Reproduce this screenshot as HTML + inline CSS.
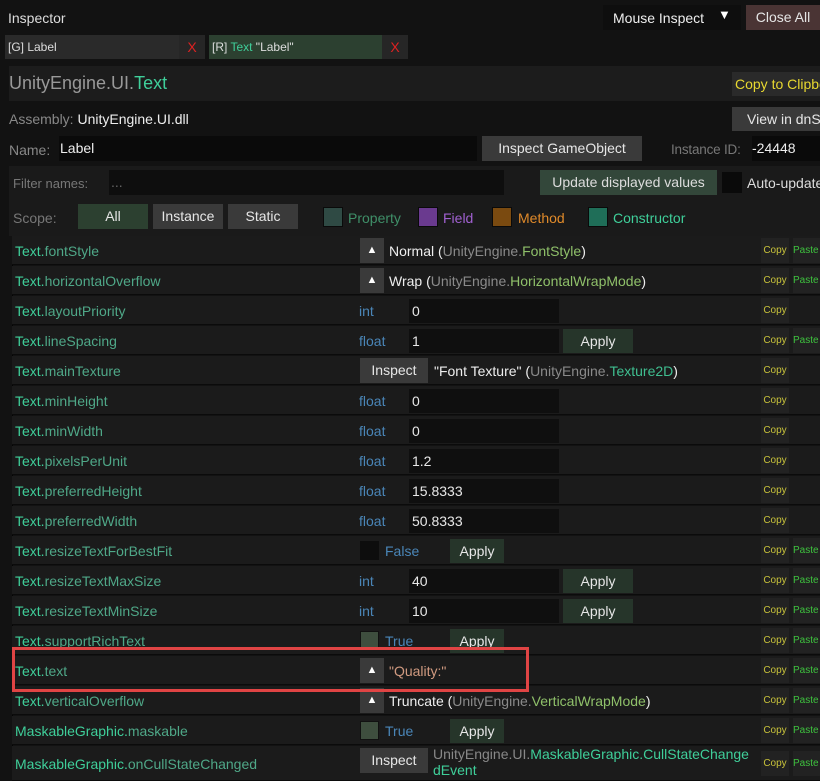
<!DOCTYPE html>
<html><head><meta charset="utf-8"><style>
*{margin:0;padding:0;box-sizing:border-box}
body{width:820px;height:781px;overflow:hidden;background:#121212;font-family:"Liberation Sans",sans-serif;font-size:14px;color:#ddd;position:relative}
.a{position:absolute;white-space:nowrap}
.btn{position:absolute;background:#3a3a3a;color:#e6e6e6;text-align:center;white-space:nowrap;overflow:hidden}
.g{color:#3fcf9a}.dg{color:#4fa888}.gr{color:#8a8a8a}.lg{color:#8fc06a}.bl{color:#4a86b8}
.row{position:absolute;left:12px;width:808px;height:29px;background:#1b1b1b;border-bottom:1px solid #0b0b0b}
.row .lb{position:absolute;left:3px;top:7px;white-space:nowrap}
.inp{position:absolute;background:#0f0f0f;height:24px;top:3px;color:#e8e8e8;padding-left:3px;line-height:24px}
.ap{position:absolute;background:#26352a;color:#e6e6e6;height:24px;top:3px;text-align:center;line-height:24px;font-size:14px}
.arr{position:absolute;left:348px;top:2px;width:24px;height:25px;background:#3a3a3a;color:#fff;text-align:center;line-height:25px;font-size:11px}
.cp{position:absolute;left:749px;top:2px;width:28px;height:25px;background:#222;color:#c8c23a;font-size:10px;line-height:25px;text-align:center}
.ps{position:absolute;left:781px;top:2px;width:30px;height:25px;background:#222;color:#3ec23e;font-size:10px;line-height:25px;overflow:hidden}
.cb{position:absolute;left:348px;top:5px;width:19px;height:19px;background:#0d0d0d}
.cb.on{background:#3e4e3e;border:1px solid #111}
.ty{position:absolute;left:347px;top:7px}
</style></head><body>
<div class="a" style="left:8px;top:10px;color:#ddd">Inspector</div>
<div class="a" style="left:603px;top:5px;width:138px;height:25px;background:#0e0e0e;"></div>
<div class="a" style="left:613px;top:10px;color:#eee">Mouse Inspect</div>
<div class="a" style="left:718px;top:7px;color:#fff;font-size:13px">▼</div>
<div class="btn" style="left:746px;top:5px;width:74px;height:25px;background:#4a3434;line-height:25px">Close All</div>

<div class="a" style="left:5px;top:35px;width:174px;height:24px;background:#2a2a2a"></div>
<div class="a" style="left:8px;top:40px;font-size:12px;color:#ddd">[G] Label</div>
<div class="a" style="left:179px;top:35px;width:26px;height:24px;background:#262626;color:#d22;text-align:center;line-height:24px">X</div>
<div class="a" style="left:209px;top:35px;width:173px;height:24px;background:#2c4030"></div>
<div class="a" style="left:212px;top:40px;font-size:12px;color:#ddd">[R] <span class="g">Text</span> "Label"</div>
<div class="a" style="left:382px;top:35px;width:26px;height:24px;background:#262626;color:#d22;text-align:center;line-height:24px">X</div>

<div class="a" style="left:9px;top:66px;width:811px;height:35px;background:#1c1c1c"></div>
<div class="a" style="left:9px;top:73px;font-size:18px;color:#999">UnityEngine.UI.<span class="g">Text</span></div>
<div class="btn" style="left:732px;top:72px;width:88px;height:24px;line-height:24px;color:#e8d830;text-align:left;padding-left:3px;background:#2a2a2a">Copy to Clipboard</div>
<div class="a" style="left:9px;top:111px;color:#888">Assembly: <span style="color:#eee">UnityEngine.UI.dll</span></div>
<div class="btn" style="left:732px;top:107px;width:88px;height:24px;line-height:24px;text-align:left;padding-left:15px">View in dnSpy</div>
<div class="a" style="left:9px;top:142px;color:#888">Name:</div>
<div class="a" style="left:59px;top:136px;width:418px;height:25px;background:#0a0a0a;color:#eee;line-height:25px;padding-left:1px">Label</div>
<div class="btn" style="left:482px;top:136px;width:160px;height:25px;line-height:25px">Inspect GameObject</div>
<div class="a" style="left:671px;top:142px;color:#777;font-size:13.5px;letter-spacing:-0.2px">Instance ID:</div>
<div class="a" style="left:752px;top:136px;width:68px;height:25px;background:#0a0a0a;color:#eee;line-height:25px;padding-left:0px">-24448</div>

<div class="a" style="left:9px;top:166px;width:811px;height:70px;background:#1a1a1a"></div>
<div class="a" style="left:13px;top:176px;color:#777;font-size:13px">Filter names:</div>
<div class="a" style="left:109px;top:170px;width:395px;height:25px;background:#0e0e0e;color:#666;padding-left:2px;line-height:25px">...</div>
<div class="btn" style="left:540px;top:170px;width:177px;height:25px;line-height:25px;background:#33473a;color:#ddd">Update displayed values</div>
<div class="a" style="left:722px;top:172px;width:20px;height:21px;background:#0a0a0a"></div>
<div class="a" style="left:747px;top:175px;color:#ddd">Auto-update</div>
<div class="a" style="left:13px;top:210px;color:#777">Scope:</div>
<div class="btn" style="left:78px;top:204px;width:70px;height:25px;line-height:25px;background:#2c4030">All</div>
<div class="btn" style="left:153px;top:204px;width:70px;height:25px;line-height:25px">Instance</div>
<div class="btn" style="left:228px;top:204px;width:70px;height:25px;line-height:25px">Static</div>
<div class="a" style="left:323px;top:207px;width:20px;height:20px;background:#2f4a44;border:1px solid #0a0a0a"></div>
<div class="a" style="left:348px;top:210px;color:#3f8f68">Property</div>
<div class="a" style="left:418px;top:207px;width:20px;height:20px;background:#6a3a8f;border:1px solid #0a0a0a"></div>
<div class="a" style="left:443px;top:210px;color:#a060d0">Field</div>
<div class="a" style="left:492px;top:207px;width:20px;height:20px;background:#7a4a10;border:1px solid #0a0a0a"></div>
<div class="a" style="left:518px;top:210px;color:#e08a2a">Method</div>
<div class="a" style="left:588px;top:207px;width:20px;height:20px;background:#1f6e58;border:1px solid #0a0a0a"></div>
<div class="a" style="left:613px;top:210px;color:#3fcf9a">Constructor</div>

<div class="a" style="left:12px;top:236px;width:1px;height:545px;background:#050505"></div>

<div class="row" style="top:236px"><div class="lb"><span class="g">Text.</span><span class="dg">fontStyle</span></div><div class="arr">▲</div><div class="a" style="left:377px;top:7px;color:#eee">Normal (<span class="gr">UnityEngine.</span><span class="lg">FontStyle</span>)</div><div class="cp">Copy</div><div class="ps">Paste</div></div>
<div class="row" style="top:266px"><div class="lb"><span class="g">Text.</span><span class="dg">horizontalOverflow</span></div><div class="arr">▲</div><div class="a" style="left:377px;top:7px;color:#eee">Wrap (<span class="gr">UnityEngine.</span><span class="lg">HorizontalWrapMode</span>)</div><div class="cp">Copy</div><div class="ps">Paste</div></div>
<div class="row" style="top:296px"><div class="lb"><span class="g">Text.</span><span class="dg">layoutPriority</span></div><div class="ty bl">int</div><div class="inp" style="left:397px;width:150px">0</div><div class="cp">Copy</div></div>
<div class="row" style="top:326px"><div class="lb"><span class="g">Text.</span><span class="dg">lineSpacing</span></div><div class="ty bl">float</div><div class="inp" style="left:397px;width:150px">1</div><div class="ap" style="left:551px;width:70px">Apply</div><div class="cp">Copy</div><div class="ps">Paste</div></div>
<div class="row" style="top:356px"><div class="lb"><span class="g">Text.</span><span class="dg">mainTexture</span></div><div class="btn" style="left:348px;top:2px;width:68px;height:25px;line-height:25px">Inspect</div><div class="a" style="left:422px;top:7px;color:#eee">"Font Texture" (<span class="gr">UnityEngine.</span><span style="color:#3fbf90">Texture2D</span>)</div><div class="cp">Copy</div></div>
<div class="row" style="top:386px"><div class="lb"><span class="g">Text.</span><span class="dg">minHeight</span></div><div class="ty bl">float</div><div class="inp" style="left:397px;width:150px">0</div><div class="cp">Copy</div></div>
<div class="row" style="top:416px"><div class="lb"><span class="g">Text.</span><span class="dg">minWidth</span></div><div class="ty bl">float</div><div class="inp" style="left:397px;width:150px">0</div><div class="cp">Copy</div></div>
<div class="row" style="top:446px"><div class="lb"><span class="g">Text.</span><span class="dg">pixelsPerUnit</span></div><div class="ty bl">float</div><div class="inp" style="left:397px;width:150px">1.2</div><div class="cp">Copy</div></div>
<div class="row" style="top:476px"><div class="lb"><span class="g">Text.</span><span class="dg">preferredHeight</span></div><div class="ty bl">float</div><div class="inp" style="left:397px;width:150px">15.8333</div><div class="cp">Copy</div></div>
<div class="row" style="top:506px"><div class="lb"><span class="g">Text.</span><span class="dg">preferredWidth</span></div><div class="ty bl">float</div><div class="inp" style="left:397px;width:150px">50.8333</div><div class="cp">Copy</div></div>
<div class="row" style="top:536px"><div class="lb"><span class="g">Text.</span><span class="dg">resizeTextForBestFit</span></div><div class="cb"></div><div class="a bl" style="left:373px;top:7px">False</div><div class="ap" style="left:438px;width:54px">Apply</div><div class="cp">Copy</div><div class="ps">Paste</div></div>
<div class="row" style="top:566px"><div class="lb"><span class="g">Text.</span><span class="dg">resizeTextMaxSize</span></div><div class="ty bl">int</div><div class="inp" style="left:397px;width:150px">40</div><div class="ap" style="left:551px;width:70px">Apply</div><div class="cp">Copy</div><div class="ps">Paste</div></div>
<div class="row" style="top:596px"><div class="lb"><span class="g">Text.</span><span class="dg">resizeTextMinSize</span></div><div class="ty bl">int</div><div class="inp" style="left:397px;width:150px">10</div><div class="ap" style="left:551px;width:70px">Apply</div><div class="cp">Copy</div><div class="ps">Paste</div></div>
<div class="row" style="top:626px"><div class="lb"><span class="g">Text.</span><span class="dg">supportRichText</span></div><div class="cb on"></div><div class="a bl" style="left:373px;top:7px">True</div><div class="ap" style="left:438px;width:54px">Apply</div><div class="cp">Copy</div><div class="ps">Paste</div></div>
<div class="row" style="top:656px"><div class="lb"><span class="g">Text.</span><span class="dg">text</span></div><div class="arr">▲</div><div class="a" style="left:377px;top:7px;color:#d09a80">"Quality:"</div><div class="cp">Copy</div><div class="ps">Paste</div></div>
<div class="row" style="top:686px"><div class="lb"><span class="g">Text.</span><span class="dg">verticalOverflow</span></div><div class="arr">▲</div><div class="a" style="left:377px;top:7px;color:#eee">Truncate (<span class="gr">UnityEngine.</span><span class="lg">VerticalWrapMode</span>)</div><div class="cp">Copy</div><div class="ps">Paste</div></div>
<div class="row" style="top:716px"><div class="lb"><span class="g">MaskableGraphic.</span><span class="dg">maskable</span></div><div class="cb on"></div><div class="a bl" style="left:373px;top:7px">True</div><div class="ap" style="left:438px;width:54px">Apply</div><div class="cp">Copy</div><div class="ps">Paste</div></div>
<div class="row" style="top:746px;height:35px"><div class="lb" style="top:10px"><span class="g">MaskableGraphic.</span><span class="dg">onCullStateChanged</span></div><div class="btn" style="left:348px;top:2px;width:68px;height:25px;line-height:25px">Inspect</div><div class="a" style="left:421px;top:0px;line-height:16px;color:#888">UnityEngine.UI.<span class="g">MaskableGraphic.CullStateChange</span><br><span class="g">dEvent</span></div><div class="cp" style="top:5px">Copy</div><div class="ps" style="top:5px">Paste</div></div>

<div class="a" style="left:12px;top:647px;width:517px;height:45px;border:3px solid #e04444"></div>
</body></html>
